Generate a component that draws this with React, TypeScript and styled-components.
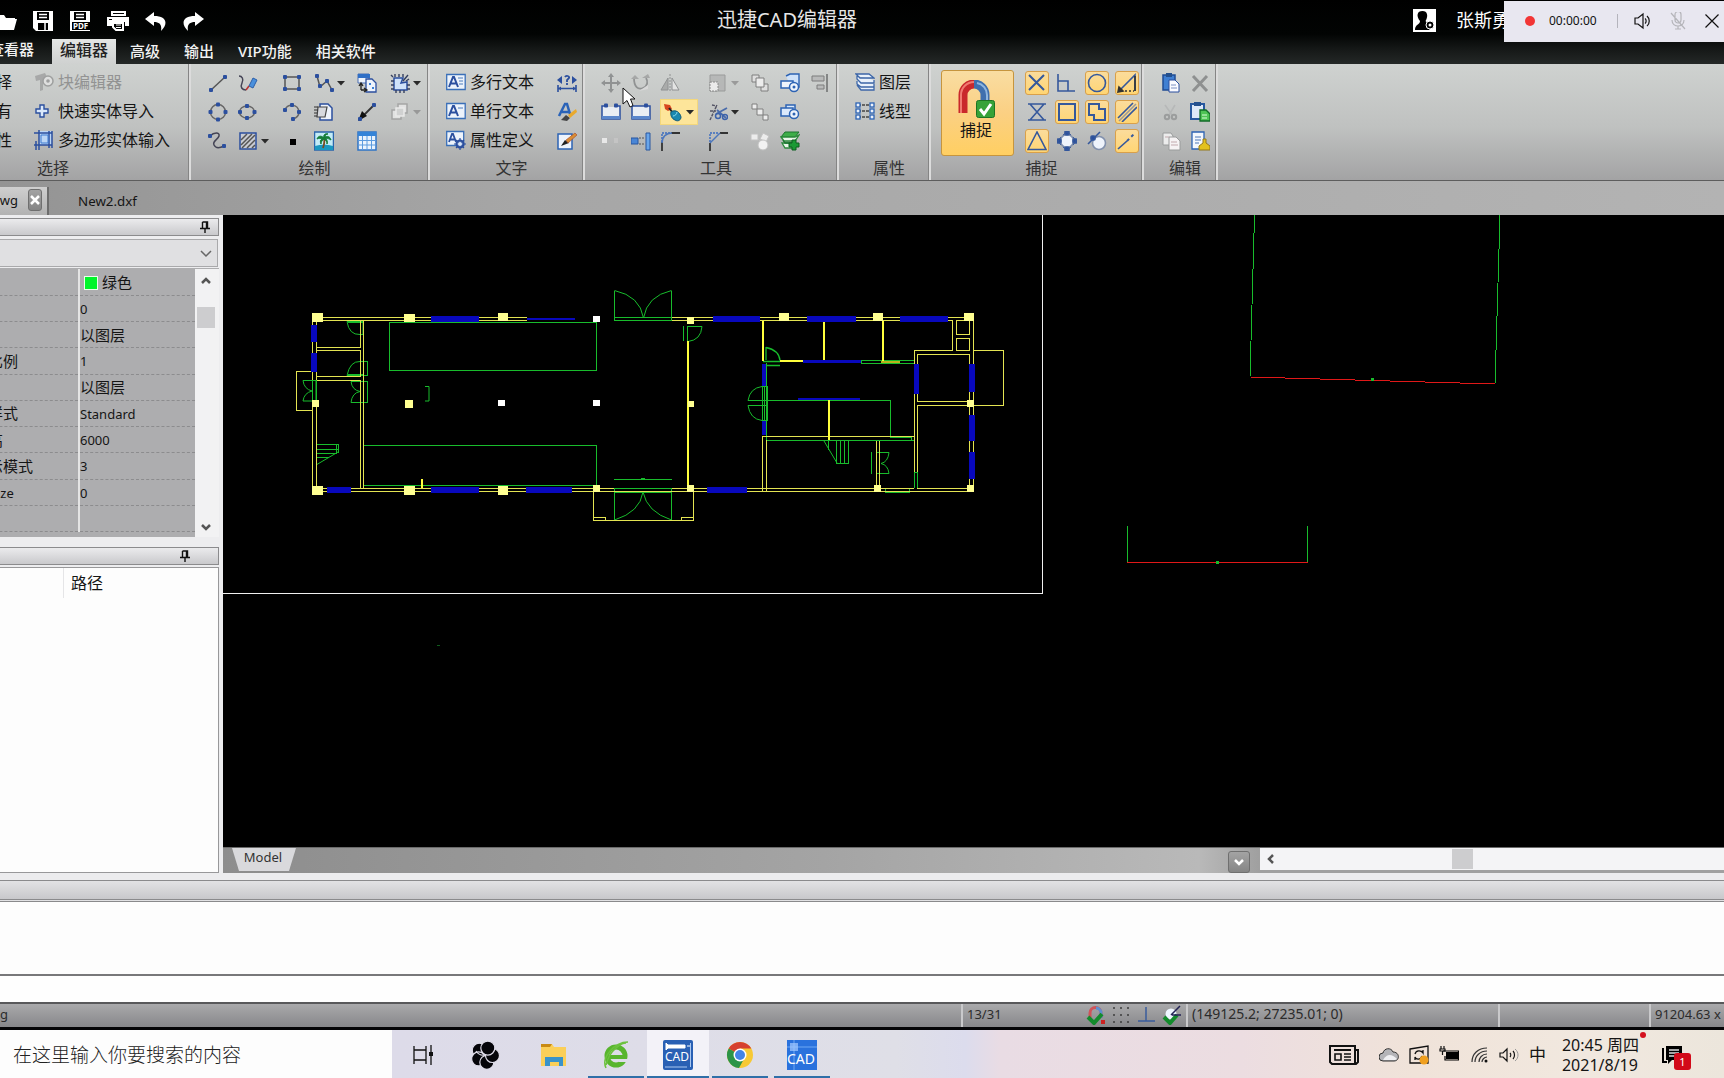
import React from 'react';
import styled, { createGlobalStyle, css } from 'styled-components';

const GlobalStyle = createGlobalStyle`
  * { box-sizing: border-box; }
  html, body { margin: 0; background: #000; overflow-x: hidden; }
  body, button, input, select, textarea {
    font-family: "Noto Sans", "Noto Sans CJK SC", sans-serif;
  }
  button { border: 0; padding: 0; background: none; color: inherit; }
  svg { display: block; flex: none; }
`;

/* ---------- shell ---------- */

const Window = styled.div`
  display: flex;
  flex-direction: column;
  min-height: 100vh;
  overflow: hidden;
  color: #151515;
`;

const TitleArea = styled.header`
  position: relative;
  height: 64px;
  background: linear-gradient(#000 0, #020403 34px, #161918 50px, #242827 64px);
  color: #fff;
`;

const TitleRow = styled.div`
  display: grid;
  grid-template-columns: 1fr auto 1fr;
  align-items: center;
  height: 39px;
`;

const QuickBar = styled.div`
  display: flex;
  align-items: center;
  gap: 15px;
  margin-left: -8px;
  padding-top: 3px;
`;

const AppTitle = styled.h1`
  margin: 0;
  padding-right: 150px;
  font-size: 20px;
  line-height: 38px;
  font-weight: 400;
  color: #e6e6e6;
`;

const UserBox = styled.div`
  display: flex;
  align-items: center;
  justify-content: flex-end;
  gap: 20px;
  padding-right: 214px;
  padding-top: 1px;
  font-size: 18px;
  line-height: 24px;
`;

const Recorder = styled.aside`
  position: absolute;
  top: 1px;
  right: 0;
  display: flex;
  align-items: center;
  width: 220px;
  height: 41px;
  padding: 0 4px 2px 21px;
  background: #e8e7f0;
  color: #111;
  font-size: 12px;
  line-height: 20px;
`;

const RecordDot = styled.span`
  width: 10px;
  height: 10px;
  margin-right: 14px;
  border-radius: 50%;
  background: #f23535;
`;

const RecorderRule = styled.span`
  width: 1px;
  height: 14px;
  margin: 0 16px 0 20px;
  background: #b4b4bc;
`;

const RecorderButtons = styled.div`
  display: flex;
  flex: 1;
  justify-content: space-between;
`;

const RibbonTabs = styled.nav`
  display: flex;
  height: 25px;
`;

const RibbonTab = styled.button<{ $active?: boolean; $cut?: boolean }>`
  height: 25px;
  padding: 0 12px 2px;
  font-size: 15px;
  line-height: 20px;
  font-weight: 500;
  white-space: nowrap;
  color: #f2f2f2;
  ${p => p.$cut && css`
    display: flex;
    justify-content: flex-end;
    width: 52px;
    padding-right: 18px;
  `}
  ${p => p.$active && css`
    width: 64px;
    margin-right: 2px;
    padding: 0 0 4px;
    background: linear-gradient(#e4e6e5, #cfd1d0);
    color: #222;
    font-size: 16px;
  `}
`;

/* ---------- ribbon ---------- */

const Ribbon = styled.div`
  display: flex;
  height: 117px;
  border-bottom: 1px solid #5d5d5d;
  background: linear-gradient(#cfd2d0, #bfc1c0 55%, #a3a3a4);
`;

const Group = styled.section<{ $w: number; $left: number }>`
  display: flex;
  flex-direction: column;
  flex: none;
  width: ${p => p.$w}px;
  padding-top: 4px;
  border-right: 2px solid #dcdcdc;
  box-shadow: inset -1px 0 #858585;
  & > div { padding-left: ${p => p.$left}px; }
`;

const GroupBody = styled.div`
  display: flex;
  height: 89px;
`;

const GroupLabel = styled.h2<{ $shift?: number }>`
  margin: 0;
  padding: 0 ${p => p.$shift || 0}px 0 10px;
  font-size: 16px;
  line-height: 24px;
  font-weight: 400;
  text-align: center;
  color: #333;
`;

const IconGrid = styled.div<{ $cols: string }>`
  display: grid;
  grid-template-columns: ${p => p.$cols};
  grid-template-rows: repeat(3, 29px);
  align-items: center;
`;

const Tool = styled.button<{ $hot?: boolean; $off?: boolean }>`
  display: flex;
  align-items: center;
  gap: 3px;
  width: max-content;
  height: 26px;
  opacity: ${p => (p.$off ? 0.75 : 1)};
  ${p => p.$hot && css`
    padding: 0 3px 0 2px;
    border: 1px solid #f3d77c;
    background: #fde59a;
  `}
`;

const LabelTool = styled(Tool)`
  gap: 4px;
  padding-bottom: 1px;
  font-size: 16px;
  line-height: 24px;
  white-space: nowrap;
  color: ${p => (p.$off ? '#808080' : '#151515')};
`;

const Column = styled.div<{ $w?: number; $cut?: boolean }>`
  display: grid;
  grid-template-rows: repeat(3, 29px);
  align-content: start;
  align-items: center;
  width: ${p => (p.$w ? `${p.$w}px` : 'auto')};
  margin-left: ${p => (p.$cut ? '-20px' : '0')};
`;

const BigSnap = styled.button`
  display: flex;
  flex-direction: column;
  align-items: center;
  width: 73px;
  height: 86px;
  margin: 2px 11px 0 0;
  padding: 9px 3px 0 0;
  border: 1px solid #c6953e;
  border-radius: 3px;
  background: linear-gradient(#f9dda2, #fbd083 50%, #ffcf62);
  font-size: 16px;
  line-height: 24px;
`;

const SnapGrid = styled.div`
  display: grid;
  grid-template-columns: repeat(4, 24px);
  grid-template-rows: repeat(3, 24px);
  gap: 5px 6px;
  padding-top: 3px;
`;

const SnapToggle = styled.button<{ $on?: boolean }>`
  display: grid;
  place-items: center;
  ${p => p.$on && css`
    border: 1px solid #d9a04a;
    border-radius: 3px;
    background: linear-gradient(#fbdc9c, #ffd573);
  `}
`;

/* ---------- documents ---------- */

const DocTabs = styled.nav`
  display: flex;
  align-items: center;
  height: 34px;
  padding-top: 6px;
  background: linear-gradient(90deg, #949494, #a6a6a6 30%, #b3b3b3);
  font-size: 13px;
  line-height: 20px;
`;

const DocTab = styled.div`
  display: flex;
  align-items: center;
  justify-content: flex-end;
  gap: 10px;
  width: 49px;
  height: 28px;
  padding: 0 5px 2px 0;
  border-right: 2px solid #6d6d6d;
  background: linear-gradient(#cfcfcf, #b2b2b2);
`;

const DocName = styled.button`
  padding-left: 29px;
`;

const SmallSquare = styled.button`
  display: grid;
  place-items: center;
  width: 22px;
  height: 22px;
  border: 1px solid #6f6f6f;
  border-radius: 3px;
  background: linear-gradient(#a3a3a3, #858585);
`;

const Work = styled.main`
  display: flex;
  flex: 1;
  min-height: 600px;
`;

const Palette = styled.aside`
  display: flex;
  flex-direction: column;
  width: 269px;
  margin-left: -46px;
  padding: 3px 4px 0 0;
  background: #ededef;
`;

const PaneHead = styled.div<{ $pad: number }>`
  display: flex;
  align-items: center;
  justify-content: flex-end;
  height: 18px;
  padding-right: ${p => p.$pad}px;
  border: 1px solid #8b8b8d;
  background: linear-gradient(#ebebed, #c9c9cc);
`;

const Combo = styled.div`
  display: grid;
  grid-template-columns: 1fr 22px;
  align-items: center;
  height: 28px;
  margin: 3px 1px 1px 0;
  border: 1px solid #a9a9ab;
  background: #e0e0e2;
`;

const ComboSelect = styled.select`
  grid-area: 1 / 1 / 2 / 3;
  width: 100%;
  height: 26px;
  border: 0;
  background: transparent;
  appearance: none;
`;

const ComboMark = styled.span`
  grid-area: 1 / 2;
  display: grid;
  place-items: center;
  pointer-events: none;
`;

const GridPane = styled.div`
  display: flex;
  height: 269px;
  margin-bottom: 10px;
  padding-top: 1px;
  background: #adadaf;
`;

const PropTable = styled.table`
  flex: 1;
  height: 263px;
  border-collapse: collapse;
  font-size: 15px;
  line-height: 22px;
  tr { height: 26px; }
`;

const Key = styled.th`
  width: 125px;
  padding: 0 0 0 4px;
  border-right: 2px solid #e4e4e4;
  border-bottom: 1px dashed #8c8c8e;
  font-weight: 400;
  text-align: left;
  white-space: nowrap;
`;

const Value = styled.td`
  padding: 0;
  border-bottom: 1px dashed #8c8c8e;
  white-space: nowrap;
`;

const Latin = styled.span`
  font-size: 13px;
`;

const Swatch = styled.span`
  display: inline-block;
  width: 14px;
  height: 14px;
  margin: 0 4px 0 4px;
  border: 1px solid #eaffea;
  background: #00f52a;
  vertical-align: -2px;
`;

const VScroll = styled.div`
  display: flex;
  flex-direction: column;
  align-items: center;
  width: 24px;
  padding: 6px 4px 4px 2px;
  background: #f2f2f3;
`;

const VThumb = styled.span`
  width: 18px;
  height: 21px;
  margin: 20px 0 auto;
  background: #cdcdcf;
`;

const ListPane = styled.div`
  flex: 1;
  margin-top: 2px;
  border: 1px solid #98989a;
  background: #fdfdfd;
`;

const ListHead = styled.div`
  width: 110px;
  margin-left: 108px;
  padding-left: 7px;
  border-left: 1px solid #e5e5e7;
  font-size: 16px;
  line-height: 30px;
`;

const Stage = styled.div`
  display: flex;
  flex-direction: column;
  flex: 1;
  min-width: 0;
`;

const Canvas = styled.div`
  flex: 1;
  min-height: 0;
  background: #000;
  overflow: hidden;
  & > svg { width: 100%; height: 100%; }
`;

const SheetBar = styled.div`
  display: flex;
  height: 26px;
  padding-left: 9px;
  border-top: 1px solid #6a6a6a;
  background: linear-gradient(90deg, #8d8d8d, #a4a4a4 40%, #b9b9b9 65%, #a0a0a0 69%);
`;

const SheetTab = styled.button`
  width: 64px;
  height: 23px;
  padding: 0 2px 4px 0;
  clip-path: polygon(0 0, 100% 0, 57px 100%, 7px 100%);
  background: #d9d9dc;
  font-size: 13px;
  line-height: 19px;
  color: #333;
`;

const SheetRight = styled.div`
  display: flex;
  align-items: flex-start;
  width: 31%;
  min-width: 300px;
  margin-left: auto;
  margin-right: 33px;
  gap: 10px;
  & > ${SmallSquare} { margin-top: 3px; }
`;

const HScroll = styled.div`
  display: flex;
  align-items: center;
  flex: 1;
  height: 22px;
  margin-right: -33px;
  padding-left: 5px;
  background: #f4f4f6;
`;

const HThumb = styled.span`
  width: 21px;
  height: 20px;
  margin-left: 38%;
  background: #cdcdcf;
`;

const CommandHead = styled.div`
  height: 29px;
  border-top: 7px solid #ececee;
  border-bottom: 3px double #8a8a8c;
  background: linear-gradient(#8a8a8c 1px, #e2e2e4 1px, #c8c8cb);
`;

const CommandLog = styled.textarea`
  display: block;
  width: 100%;
  height: 74px;
  border: 0;
  border-bottom: 2px solid #78787a;
  background: #fdfdfd;
  resize: none;
`;

const CommandInput = styled.input`
  display: block;
  width: 100%;
  height: 26px;
  border: 0;
  background: #fefefe;
`;

const StatusBar = styled.footer`
  display: flex;
  align-items: stretch;
  height: 28px;
  border-top: 2px solid #58585a;
  border-bottom: 3px solid #050507;
  background: linear-gradient(#a9a9ab, #87878a);
  font-size: 13px;
  line-height: 20px;
  color: #2b2b2b;
`;

const StatusCell = styled.div<{ $w?: number; $size?: number }>`
  display: flex;
  align-items: center;
  flex: ${p => (p.$w ? 'none' : '1')};
  width: ${p => (p.$w ? `${p.$w}px` : 'auto')};
  padding: 0 0 3px 4px;
  border-left: 2px solid #c9c9cb;
  font-size: ${p => p.$size || 13}px;
  white-space: nowrap;
  &:first-child { border-left: 0; padding-left: 0; }
`;

const StatusIcons = styled.div`
  display: flex;
  align-items: center;
  justify-content: space-between;
  width: 100px;
  padding: 0 4px 2px 0;
`;

/* ---------- taskbar ---------- */

const Taskbar = styled.div`
  display: flex;
  height: 48px;
  background: linear-gradient(90deg, #dddbe9 23%, #dfdfe7 52%, #dcdced 56%, #e9dce4 58%, #ecdde1 72%, #f0e3d9 82%, #f1e8df 92%, #ece6dc);
`;

const Search = styled.input`
  width: 392px;
  padding: 2px 13px 0;
  border: 0;
  background: #fdfdfd;
  font-size: 19px;
  line-height: 28px;
  font-weight: 300;
  &::placeholder { color: #222; opacity: 1; }
`;

const TaskGroup = styled.div`
  display: flex;
  margin-right: 7px;
`;

const Task = styled.button<{ $run?: boolean; $active?: boolean }>`
  display: grid;
  place-items: center;
  width: 62px;
  padding-top: 4px;
  background: ${p => (p.$active ? '#f3f2f8' : 'none')};
  border-bottom: 2px solid transparent;
  background-clip: padding-box;
  ${p => (p.$run || p.$active) && css`
    border-image: linear-gradient(90deg, transparent ${p.$active ? 0 : 5}px, #2f6fa8 ${p.$active ? 0 : 5}px, #2f6fa8 ${p.$active ? 62 : 57}px, transparent ${p.$active ? 62 : 57}px) 2;
  `}
`;

const Tray = styled.div`
  display: flex;
  align-items: center;
  gap: 10px;
  margin-left: auto;
  padding-right: 33px;
  padding-top: 2px;
`;

const NewsButton = styled(Tool)`
  margin-right: 10px;
`;

const Ime = styled.button`
  font-size: 17px;
  line-height: 24px;
`;

const Clock = styled.time`
  position: relative;
  margin: 0 12px 0 6px;
  font-size: 16px;
  line-height: 20px;
  white-space: nowrap;
`;

const AlertDot = styled.span`
  position: absolute;
  top: -3px;
  right: -7px;
  width: 6px;
  height: 6px;
  border-radius: 50%;
  background: #d4121f;
`;

const Notify = styled.button`
  position: relative;
  width: 30px;
  height: 30px;
`;

const Count = styled.span`
  position: absolute;
  right: 0;
  bottom: 0;
  width: 17px;
  height: 17px;
  border-radius: 3px;
  background: #d20a19;
  color: #fff;
  font-size: 11px;
  line-height: 17px;
`;

const Pointer = styled.span`
  position: absolute;
  top: 87px;
  left: 622px;
  pointer-events: none;
`;

/* ---------- glyphs ---------- */

const B = '#2b4f9e';
const G = '#7d7f80';
const W = '#eef3fb';

type GlyphProps = { children: React.ReactNode; w?: number; h?: number };
const Glyph = ({ children, w = 20, h = 20 }: GlyphProps) => (
  <svg width={w} height={h} viewBox={`0 0 ${w} ${h}`} fill="none" aria-hidden="true">{children}</svg>
);

const dots = (pts: number[][], c = B, s = 4) =>
  pts.map(([x, y], i) => <rect key={i} x={x - s / 2} y={y - s / 2} width={s} height={s} rx={1} fill={c} />);

const Down = ({ off }: { off?: boolean }) => (
  <Glyph w={8} h={6}><path d="M0 1h8L4 5.500z" fill={off ? '#8a8a8a' : '#2a2a2a'} /></Glyph>
);

const Chevron = ({ d, c = '#555', w = 2 }: { d: string; c?: string; w?: number }) => (
  <Glyph w={12} h={12}><path d={d} stroke={c} strokeWidth={w} /></Glyph>
);

const Pin = () => (
  <Glyph w={10} h={12}><path d="M2.500 1h5v6M2.500 1v6M0 7.500h10M5 8v4M6.500 1v6" stroke="#111" strokeWidth="1.400" /></Glyph>
);

const icon: Record<string, React.ReactNode> = {
  blockEdit: <Glyph><path d="M1 4l10-3 2 4-4 2v11l-3 1V8L2 9z" fill="#9b9c9c" /><circle cx="14" cy="9" r="5" fill="#e5e5e5" stroke="#8f9090" strokeWidth="1.500" /><circle cx="14" cy="9" r="1.800" fill="#8f9090" /></Glyph>,
  plus: <Glyph><path d="M6 4h4v4h4v4h-4v4H6v-4H2V8h4z" fill="#dbe9fb" stroke={B} strokeWidth="1.400" /></Glyph>,
  poly: <Glyph><path d="M5 1h13v14H5z" fill="#bcd6f5" /><path d="M5 0v20M15 1v17M0 3h18M0 15h18M2 20v-9M18 1v17" stroke={B} strokeWidth="1.500" /><path d="M7 5h7v8H7z" stroke="#3c7ad0" /></Glyph>,
  line: <Glyph><path d="M3 17L17 4" stroke="#555" strokeWidth="1.500" />{dots([[3, 17], [17, 4]])}</Glyph>,
  pen: <Glyph><path d="M1 3c3 0 5 3 3 7s0 7 4 7" stroke="#445" strokeWidth="1.500" /><path d="M8 17l3-4" stroke="#b33" strokeWidth="1.500" /><path d="M11 13l4-8 4 2-4 8z" fill="#4a90dc" stroke="#2c5fa8" /></Glyph>,
  rect: <Glyph><path d="M3 4h14v12H3z" stroke="#555" strokeWidth="1.500" />{dots([[3, 4], [17, 4], [3, 16], [17, 16]])}</Glyph>,
  pline: <Glyph><path d="M3 3l3 11 7-6 5 9" stroke="#555" strokeWidth="1.500" />{dots([[3, 3], [6, 13], [13, 8], [18, 17]])}</Glyph>,
  insert: <Glyph><path d="M1 1h11v9H1z" fill={W} stroke="#4a6fb0" /><path d="M1 1h12v4H1z" fill="#2f6fc6" /><path d="M9 6h6l4 4v9H9z" fill={W} stroke={B} strokeWidth="1.300" /><path d="M4 17v-6M2 13l2-3 2 3M4 17h5M7 15l3 2-3 2" stroke="#222" strokeWidth="1.300" /><path d="M12 10h2v2h-2zM15 14h2v2h-2z" fill="#3a82d8" /></Glyph>,
  region: <Glyph><path d="M4 5h9l-2 5 6-1v8H4z" fill="#cfe2fa" stroke={B} strokeWidth="1.500" /><path d="M1 2l2 2M5 1v3M9 1v3M13 1v3M18 2l-5 6M19 6l-3 2M1 8h3M1 12h3M1 16h3M17 12h3M17 16h3M6 17v3M10 17v3M14 17v3" stroke="#343f60" strokeWidth="1.400" /></Glyph>,
  circle: <Glyph><circle cx="10" cy="10" r="7.500" stroke="#666" strokeWidth="1.500" />{dots([[10, 2.5], [10, 17.5], [2.500, 10], [17.5, 10]])}</Glyph>,
  ellipse: <Glyph><ellipse cx="9" cy="10" rx="7.500" ry="6" stroke="#666" strokeWidth="1.500" />{dots([[9, 4], [9, 16], [2, 10], [16.500, 10]])}</Glyph>,
  arc: <Glyph><path d="M3 8c2-6 13-7 14 2 0 4-3 6-6 7" stroke="#666" strokeWidth="1.500" />{dots([[3, 8], [10, 3], [17, 10], [11, 17]])}</Glyph>,
  copyPage: <Glyph><path d="M6 2h8l4 4v12H6z" fill={W} stroke={B} strokeWidth="1.500" /><path d="M4 5h9l-2 10H3z" fill="#d7d9de" stroke="#444" strokeWidth="1.200" /><path d="M0 5h4M0 8h4M0 11h3M0 14h3" stroke="#333" /></Glyph>,
  arrow: <Glyph><path d="M17 3L3 17" stroke="#333" strokeWidth="1.800" /><path d="M1 19l4-10 5 5z" fill="#111" />{dots([[17, 3], [3, 17]])}</Glyph>,
  wipe: <Glyph><path d="M2 8h9v9H2zM8 2h9v9H8z" fill="#ececec" stroke="#9a9b9b" strokeWidth="1.500" /><path d="M6 6h8v8H6z" fill="#d5d6d6" stroke="#f6f6f6" strokeWidth="1.500" /></Glyph>,
  spline: <Glyph><path d="M2 5c4-4 10-4 9 0s-7 5-5 9 6 3 10 1" stroke="#445" strokeWidth="1.500" />{dots([[2, 5], [16, 15]])}</Glyph>,
  hatch: <Glyph><path d="M2 2h16v16H2z" fill="#c9cbd2" stroke={B} strokeWidth="1.500" /><path d="M3 9l6-6M3 14L14 3M4 17L17 4M9 17l8-8M14 17l3-3" stroke="#555" strokeWidth="1.500" /></Glyph>,
  point: <Glyph><path d="M8 8h6v6H8z" fill="#000" /></Glyph>,
  image: <Glyph><path d="M0.500 1h19v18H.5z" fill="#c3ecf7" stroke="#2b66ac" strokeWidth="1.500" /><path d="M1 15c6-2 12-2 18 0v4H1z" fill="#1998c0" /><path d="M10 7c1 4 0 7-1 10" stroke="#7a4b22" strokeWidth="1.800" /><path d="M10 7C7 4 4 5 3 8c2-1 4-1 5 0-2 1-2 3-1 5 0-3 2-4 3-5 2 1 3 3 3 5 1-2 0-4-1-5 2-1 3 0 5 1-1-4-4-4-6-3 0-2 2-3 3-3-3-1-5 1-4 4z" fill="#137d38" stroke="#137d38" /></Glyph>,
  table: <Glyph><path d="M1 1h18v18H1z" fill="#e9f3fd" stroke="#2f74c6" strokeWidth="1.500" /><path d="M1 1h18v4H1z" fill="#3584d8" /><path d="M5.500 5v14M10 5v14M14.500 5v14M1 9.500h18M1 14h18" stroke="#5b9bdf" /></Glyph>,
  mtext: <Glyph><path d="M.7 2.500h18.500v15H.7z" fill="#edf3fb" stroke="#3a6fb8" strokeWidth="1.300" /><path d="M3 15L7 5h1l4 10M5 11.500h5" stroke={B} strokeWidth="2" /><path d="M12 6h5M13 9h4M13 12h4" stroke="#4d7dbc" /></Glyph>,
  stext: <Glyph><path d="M.7 2.500h18.500v15H.7z" fill="#edf3fb" stroke="#3a6fb8" strokeWidth="1.300" /><path d="M3 15L7 5h1l4 10M5 11.500h5" stroke={B} strokeWidth="2" /><path d="M12 7h5" stroke="#4d7dbc" /></Glyph>,
  attr: <Glyph><path d="M.7 1.500h17v14H.7z" fill="#edf3fb" stroke="#3a6fb8" strokeWidth="1.300" /><path d="M3 12L6 4h1l3 8M4 9.500h5" stroke={B} strokeWidth="1.800" /><circle cx="14" cy="14" r="3.500" stroke={B} strokeWidth="2" /><path d="M14 8v12M8 14h12M10 10l8 8M18 10l-8 8" stroke={B} strokeWidth="1.200" /><circle cx="14" cy="14" r="2" fill="#dbe8f8" /></Glyph>,
  dim: <Glyph><path d="M1 15.500h18M1 12v7M19 12v7" stroke={B} strokeWidth="1.600" /><path d="M0 7l5-4v8zM20 7l-5-4v8zM1 15.500l3-2v4zM19 15.500l-3-2v4z" fill={B} /><path d="M8 4c1-2 5-1 4 1l-2 2v2M10 10v2" stroke={B} strokeWidth="1.800" /></Glyph>,
  tstyle: <Glyph><path d="M2 14L8 2h2l3 10M5 10h7" stroke="#2a63b8" strokeWidth="2.500" /><path d="M4 18l5-5 4 3-3 3z" fill="#444" /><path d="M11 13l8-6 1 3-7 6z" fill="#e9a92d" /></Glyph>,
  edit: <Glyph><path d="M1 3h14v15H1z" fill={W} stroke="#2c63b4" strokeWidth="1.500" /><path d="M4 15l4-6 4 3z" fill="#222" /><path d="M9 9l9-7 2 2-9 8z" fill="#d98d33" stroke="#a34427" strokeWidth=".6" /></Glyph>,
  move: <Glyph><path d="M10 2v16M2 10h16" stroke={G} strokeWidth="2" /><path d="M10 0l3 4H7zM10 20l3-4H7zM0 10l4-3v6zM20 10l-4-3v6z" fill={G} /></Glyph>,
  rotate: <Glyph><path d="M3 5c0 9 4 12 9 10 5-2 5-7 3-10" stroke={G} strokeWidth="1.800" /><path d="M0 6l4-4 4 4zM11 5h8l-2-4z" fill="#9a9b9b" /><path d="M8 18l9-6v4z" fill="#ddd" /></Glyph>,
  mirror: <Glyph><path d="M1 17L8 5v12z" fill="#9fa0a0" stroke={G} /><path d="M12 5l7 12h-7z" fill="#ececec" stroke={G} /><path d="M10 1v18" stroke={G} strokeDasharray="2 1" /></Glyph>,
  scale: <Glyph><path d="M2 2h15v16H2z" fill="#b0b1b1" stroke="#8a8b8b" /><path d="M2 9h8v9H2z" fill="#f6f6f6" stroke="#777" strokeDasharray="2 1" /></Glyph>,
  stack: <Glyph><path d="M2 2h7v7H2zM11 11h7v7h-7z" fill="#dedede" stroke="#7e7f7f" /><path d="M6 5h8v9H6z" fill="#ececec" stroke="#7e7f7f" /></Glyph>,
  shapes: <Glyph><path d="M6 3l4-2h9v13h-8" fill="#cfe2fa" stroke="#2c63b4" strokeWidth="1.400" /><path d="M1 8h12v7H1z" fill={W} stroke="#2c63b4" strokeWidth="1.500" /><circle cx="14" cy="14" r="4.500" fill={W} stroke="#2c63b4" strokeWidth="1.500" /><circle cx="14" cy="14" r="1.500" fill="#2c63b4" /></Glyph>,
  align: <Glyph w={17}><path d="M1 3h12v5H1zM6 12h7v4H6z" fill="#b9baba" stroke="#7c7d7d" /><path d="M16 1v18" stroke="#6d6e6e" strokeWidth="1.500" /></Glyph>,
  boxA: <Glyph><path d="M1 4h18v13H1z" fill="#e9edf4" stroke={B} strokeWidth="1.500" /><path d="M1 14h18v3H1z" fill="#5a86cc" />{dots([[5, 3.500], [15, 3.500]], B, 4)}<path d="M7 3h6v2H7z" fill="#c4c6c6" /></Glyph>,
  boxB: <Glyph><path d="M1 4h18v13H1z" fill="#e9edf4" stroke={B} strokeWidth="1.500" /><path d="M1 14h18v3H1z" fill="#5a86cc" />{dots([[15, 3.500]], B, 4)}</Glyph>,
  explode: <Glyph><path d="M1 2l6 1 2 4-4 2-3-2z" fill="#d8461f" /><path d="M6 6l4 5" stroke="#222" strokeWidth="2" /><path d="M8 10c4-3 9 0 10 5 0 3-3 5-6 3-3-1-5-5-4-8z" fill="#1c88b0" stroke="#0e5878" /><path d="M10 14c2 0 4-2 4-4" stroke="#8fe0f4" /></Glyph>,
  trim: <Glyph><path d="M2 18L9 3M4 3l5 1M2 9h6" stroke="#556" strokeDasharray="3 1" strokeWidth="1.400" /><path d="M8 12l11-6M9 8l9 8" stroke="#4a6cab" strokeWidth="1.800" /><circle cx="17" cy="15" r="2.500" stroke="#3c62aa" strokeWidth="1.500" /><circle cx="10" cy="14" r="2.500" stroke="#3c62aa" strokeWidth="1.500" /></Glyph>,
  cubes: <Glyph><path d="M2 2h5v5H2zM7 7h6v6H7zM13 13h5v5h-5z" fill="#ececec" stroke="#7e7f7f" /></Glyph>,
  shapeB: <Glyph><path d="M1 6h12v8H1zM6 6V3h9v5" fill="#dbe9fb" stroke="#2c63b4" strokeWidth="1.500" /><circle cx="14" cy="12" r="4.500" fill={W} stroke="#2c63b4" strokeWidth="1.500" /><circle cx="14" cy="12" r="1.500" fill="#2c63b4" /></Glyph>,
  breakAt: <Glyph><path d="M1 7h5v5H1z" fill="#e8e8e8" /><path d="M13 7h4v5h-4z" fill="#c4c4c4" /></Glyph>,
  extend: <Glyph><path d="M0 7h7v6H0z" fill="#4a86d6" stroke="#2856a0" /><path d="M8 7h6M8 13h6" stroke="#555" strokeDasharray="2 1" /><path d="M15 2h4v17h-4z" fill="#6aa6ea" stroke="#2856a0" /></Glyph>,
  fillet: <Glyph><path d="M2 11L2 2h9" stroke="#3a6cc0" strokeWidth="1.400" strokeDasharray="2 1" /><path d="M2 20v-9M11 2h9" stroke="#333" strokeWidth="1.800" /><path d="M2 12C2 6 6 2 12 2" stroke="#4b76bc" strokeWidth="1.500" /></Glyph>,
  chamfer: <Glyph><path d="M2 11V2h9" stroke="#3a6cc0" strokeWidth="1.400" strokeDasharray="2 1" /><path d="M2 20v-8M12 2h8" stroke="#333" strokeWidth="1.800" /><path d="M2 12L12 2" stroke="#4b76bc" strokeWidth="1.500" /></Glyph>,
  scatter: <Glyph><path d="M1 3h7v6H1zM13 2l6 3-3 6-6-3zM8 8l4 4" fill="#ececec" stroke="#c2c2c2" /><circle cx="13" cy="14" r="5" fill="#f2f2f2" stroke="#c2c2c2" /></Glyph>,
  layerAdd: <Glyph><path d="M5 1h14l-4 5H1z" fill="#3eae49" stroke="#1d7530" /><path d="M1 6l3 4h11l4-6-4 2zM2 12l3 5h10l-1-5z" fill="#eaf7ea" stroke="#2c8a3c" strokeWidth="1.300" /><path d="M3 9l2 3h10" stroke="#1d7530" strokeWidth="1.300" /><path d="M12 9h4v3h3v4h-3v3h-4v-3H9v-4h3z" fill="#1a9a35" stroke="#0d5e20" /></Glyph>,
  layers: <Glyph><path d="M1 2h13l5 4H5zM2 4v3l4 4h13V8M2 9v3l4 3h13v-3M2 13l4 5h13v-3" fill="#e9f1fb" stroke="#3c66a8" strokeWidth="1.300" /></Glyph>,
  ltype: <Glyph><path d="M3 4h14M3 10h14M3 16h14" stroke="#444" strokeDasharray="3 1" strokeWidth="1.300" />{[4, 10, 16].map(y => <React.Fragment key={y}><rect x="1" y={y - 2} width="4" height="4" fill={W} stroke="#2c63b4" strokeWidth="1.300" /><rect x="15" y={y - 2} width="4" height="4" fill={W} stroke="#2c63b4" strokeWidth="1.300" /></React.Fragment>)}</Glyph>,
  paste: <Glyph><path d="M2 2h12v15H2z" fill="#3f7fd2" stroke="#1f4c94" strokeWidth="1.500" /><path d="M5 0h6v4H5z" fill="#24508e" /><path d="M8 7h6l4 4v8H8z" fill="#fbfbff" stroke={B} /><path d="M10 12h5M10 15h6" stroke="#7a8fc0" /></Glyph>,
  del: <Glyph><path d="M3 3l14 15M17 3L3 18" stroke="#8e9090" strokeWidth="3" /></Glyph>,
  cut: <Glyph><path d="M4 3l7 10M14 3L8 13" stroke="#b6b8b8" strokeWidth="1.600" /><circle cx="6" cy="15" r="2.200" stroke="#9b9d9d" strokeWidth="2" /><circle cx="13" cy="15" r="2.200" stroke="#9b9d9d" strokeWidth="2" /></Glyph>,
  pasteBlk: <Glyph><path d="M1 2h13v15H1z" fill="#dde8f8" stroke="#27589f" strokeWidth="2" /><path d="M4 0h7v4H4z" fill="#24508e" /><path d="M10 8h6l4 4v7H10z" fill="#4ec355" stroke="#116b27" strokeWidth="1.300" /><path d="M12 13h5M12 16h5" stroke="#d9ffd9" /></Glyph>,
  copy: <Glyph><path d="M2 2h8l2 3v9H2z" fill="#ececec" stroke="#9a9c9c" /><path d="M8 6h7l4 4v9H8z" fill="#f6f3f4" stroke="#9a9c9c" /><path d="M10 11h6M10 14h7M4 6h4" stroke="#c2a9ad" /></Glyph>,
  matchProp: <Glyph><path d="M2 1h12v17H2z" fill="#f4f7fc" stroke="#2c63b4" strokeWidth="1.300" /><path d="M5 6h6M5 9h6M5 12h4" stroke="#4c77b8" /><path d="M13 8h3v4l4 3v4H9v-4l4-3z" fill="#e3c21f" stroke="#94791a" /></Glyph>,
};

const snapShapes: { id: string; on?: boolean; name: string; art: React.ReactNode }[] = [
  { id: 's1', on: true, name: '交点', art: <path d="M2 2l15 15M17 2L2 17" strokeWidth="2" /> },
  { id: 's2', name: '垂足', art: <path d="M1 1v17h17M1 8h10v10" /> },
  { id: 's3', on: true, name: '圆心', art: <circle cx="10" cy="10" r="8.500" /> },
  { id: 's4', on: true, name: '外观', art: <><path d="M2 18L18 2v16" /><path d="M4 18h13" stroke="#333" strokeDasharray="2 2" /><path d="M1 19l1-5 4 4zM18 3v15" fill="#333" stroke="#333" /></> },
  { id: 's5', name: '最近点', art: <path d="M1 2h18M1 18h18M3 2l14 16M17 2L3 18" /> },
  { id: 's6', on: true, name: '端点', art: <path d="M2 2h16v16H2z" strokeWidth="2" /> },
  { id: 's7', on: true, name: '插入点', art: <path d="M2 2h10v5h6v11H7v-5H2z" strokeWidth="2" /> },
  { id: 's8', on: true, name: '平行', art: <><path d="M1 16L16 1M5 20L20 5" /><path d="M2 19L19 2" stroke="#999" /></> },
  { id: 's9', on: true, name: '中点', art: <path d="M10 1L1 18.500h18z" /> },
  { id: 's10', name: '象限点', art: <><circle cx="10" cy="10" r="6.500" fill={W} stroke="#8291ad" />{dots([[10, 2], [10, 18], [2, 10], [18, 10]])}<path d="M6 4l4-3 4 3M16 6l3 4-3 4M14 16l-4 3-4-3M4 14l-3-4 3-4" strokeWidth="1" /></> },
  { id: 's11', name: '切点', art: <><circle cx="12" cy="12" r="6.500" fill={W} stroke="#8291ad" /><path d="M1 13L13 1" />{dots([[6, 7]])}</> },
  { id: 's12', on: true, name: '延伸', art: <><path d="M1 18L10 10" /><path d="M10 10l8-8" strokeDasharray="3 3" strokeWidth="2" /></> },
];

type Cell = { k?: string; d?: boolean; off?: boolean; hot?: boolean };
const ToolCell = ({ c }: { c: Cell }) =>
  c.k ? (
    <Tool $hot={c.hot} $off={c.off} aria-label={c.k}>
      {icon[c.k]}
      {c.d && <Down off={c.off} />}
    </Tool>
  ) : <span />;

const drawCells: Cell[] = [
  { k: 'line' }, { k: 'pen' }, { k: 'rect' }, { k: 'pline', d: true }, { k: 'insert' }, { k: 'region', d: true },
  { k: 'circle' }, { k: 'ellipse' }, { k: 'arc' }, { k: 'copyPage' }, { k: 'arrow' }, { k: 'wipe', d: true, off: true },
  { k: 'spline' }, { k: 'hatch', d: true }, { k: 'point' }, { k: 'image' }, { k: 'table' }, {},
];

const toolCells: Cell[] = [
  { k: 'move', off: true }, { k: 'rotate', off: true }, { k: 'mirror', off: true }, { k: 'scale', d: true, off: true }, { k: 'stack' }, { k: 'shapes' }, { k: 'align' },
  { k: 'boxA' }, { k: 'boxB' }, { k: 'explode', d: true, hot: true }, { k: 'trim', d: true }, { k: 'cubes' }, { k: 'shapeB' }, {},
  { k: 'breakAt' }, { k: 'extend' }, { k: 'fillet' }, { k: 'chamfer' }, { k: 'scatter' }, { k: 'layerAdd' }, {},
];

const props: { key?: string; latinKey?: boolean; value: string; latin?: boolean; swatch?: boolean }[] = [
  { value: '绿色', swatch: true },
  { value: '0', latin: true },
  { value: '以图层' },
  { key: '线型比例', value: '1', latin: true },
  { value: '以图层' },
  { key: '文字样式', value: 'Standard', latin: true },
  { key: '文字高', value: '6000', latin: true },
  { key: '点显示模式', value: '3', latin: true },
  { key: 'PointSize', latinKey: true, value: '0', latin: true },
];

/* ---------- drawing ---------- */

const Y = '#e4e452';
const GR = '#18bc2c';
const BL = '#0808bd';

const Drawing = () => (
  <svg fill="none" role="img" aria-label="Model" shapeRendering="crispEdges">
    <g transform="translate(-223 -215)">
      <path d="M1042.500 215V593.500H223" stroke="#f0f0f0" />
      <path d="M1254.500 215L1250 377M1500 215L1495 384M1127.500 526V562M1307.500 526V562" stroke={GR} />
      <path d="M1250 377L1495 384M1127 562.500H1308" stroke="#e01818" />
      <path d="M1371 378h3v3h-3zM1216 561h3v3h-3z" fill={GR} />
      <path d="M437 645h3v1h-3z" fill="#0f5c1c" />

      {/* green outlines */}
      <g stroke={GR}>
        <path d="M389.500 322.500H596.500V370.500H389.500zM363.500 488V445.500H596.500V488M363 485.500H597" />
        <path d="M614.500 321V290.500M671.500 321V290.500M614 320.500H672M614 317.500H672M614.500 488V520.500M671.500 488V520.500M614 488.500H672M614 479.500H672M641 478.500h4M614 492.500H672" />
        <path d="M766 400.500H890.500V437M766.500 363V440M766 440.500H914" />
        <path d="M861.500 360.500H903M861 363.500H914.500V360.500H903M861.500 360V364M890 437.500H911V441M885.500 488.500H909V492H885.500zM914.500 472V488M917.500 472V488M914 472.500h4" />
        <path d="M316 444.500H338M316 449.500H338M316 453.500H337M316 457.500H329M336.500 444V453M338.500 444V453" />
        <path d="M836.500 441V463M840.500 441V463M844.500 441V463M848.500 441V463M836 463.500H849M828.500 441V450" />
        <path d="M683.500 326V341M687.500 326V341M763.500 347V361" />
      </g>
      <g stroke={GR} shapeRendering="auto">
        <path d="M614.500 290.500Q640 296 643.500 318Q647 296 671.500 290.500M614.500 520Q640 512 643 492Q647 512 671.500 520" />
        <path d="M347 321.500H363V334M347 321.500Q349 335 360 334.500H363M347 375.500H363M347 375.500Q350 361 360 361.500H363M367.500 361V376M363 361.500h5M363 375.500h5M360.500 361V376M348 322.500H363M348 374.500H363" />
        <path d="M351 381.500H367M351 381.500Q352 390 360 391.500Q352 393 351 402.500H367M367.500 381V403M363.500 381V403M360.500 381V403M303 380.500H316V401H303M303 380.500Q304 389 312 391Q304 393 303 401M312.500 380V401" />
        <path d="M425 386.500h4V401h-4M338 452L316 465M688 326.500H702Q701 340 688 341.500" />
        <path d="M766 347.500Q779 350 780 360.500M766 347V360M763 361.500H780M764 365.500H780" strokeWidth="1.300" />
        <path d="M762 386.500Q750 388 748 400.500H768M748 405.500H768M748 405.500Q750 419 762 420.500M762.500 386V421M764.500 386V421M767.500 386V421M762 386.500h5M762 420.500h5" />
        <path d="M824 441L837 463M871.500 452V474M876 452.500H889Q888 462 881 463.500Q888 465 889 473.500H876" />
      </g>

      {/* yellow walls */}
      <g stroke={Y}>
        <path d="M312 317.500H527M312 320.500H527M672 317.500H973.500V492M672 320.500H953" />
        <path d="M312.500 317V492M316.500 321V488M316 347.500H360V321M316 350.500H360V376.500H316M316 380.500H360V488M363.500 321V488" />
        <path d="M312 371.500H296.500V410.500H312M312 488.500H593M600 488.500H914M312 491.500H974M918 488.500H970" />
        <path d="M593.500 492V520.500H693.500V492M593 517.500H605V520M694 517.500H681V520" />
        <path d="M952.500 321V350.500H914.500V488M956.500 320.500H969.500V334.500H956.500zM956.500 338.500H969.500V350.500H956.500zM917.500 354.500H969.500V401.500H917.500zM917.500 405.500H969.500V488H917.500z" />
        <path d="M974 350.500H1003.500V405.500H974M762.500 491V436.500H914M766.500 440V491M876.500 441V488M879.500 441V488" />
      </g>
      <path d="M688 341V488M763 321V361M824 321V360M883 321V361M780 361H803M829 400V440M422 479V488" stroke="#ffff3c" strokeWidth="2" />
      <path d="M881 361.500H900" stroke="#b8b21d" strokeWidth="2" />
      <path d="M312.500 380V402M316.500 380V402M614 488.500H672M914.500 472V488M917.500 472V488" stroke={GR} />

      {/* windows */}
      <path d="M431 316h48v6h-48zM713 316h47v6h-47zM807 316h49v6h-49zM900 316h48v6h-48zM327 487h24v6h-24zM431 487h48v6h-48zM526 487h46v6h-46zM707 487h40v6h-40zM311 325h6v17h-6zM311 353h6v19h-6zM762 364h4v22h-4zM762 421h4v14h-4zM803 360h58v3h-58zM914 364h5v30h-5zM969 364h6v28h-6zM969 415h6v26h-6zM969 452h6v27h-6zM527 318h48v2h-48zM798 398h62v2h-62z" fill={BL} />

      {/* columns */}
      <path d="M312 313h11v9h-11zM404 314h11v8h-11zM498 313h10v8h-10zM687 317h7v7h-7zM779 313h10v8h-10zM873 313h10v8h-10zM964 313h10v8h-10zM312 400h7v7h-7zM405 400h8v8h-8zM688 401h6v6h-6zM967 400h7v7h-7zM312 486h11v9h-11zM404 486h11v9h-11zM498 486h10v9h-10zM593 485h7v7h-7zM687 485h7v7h-7zM874 485h7v7h-7zM967 485h7v7h-7z" fill="#ffff91" />
      <path d="M593 316h7v6h-7zM498 400h7v6h-7zM593 400h7v6h-7z" fill="#fff" />
    </g>
  </svg>
);

export default function App() {
  return (
    <Window>
      <GlobalStyle />
      <TitleArea>
        <TitleRow>
          <QuickBar>
            <Tool aria-label="打开"><Glyph w={25}><path d="M0 4h12l2 3h9v3H8L3 19H0z" fill="#fff" /><path d="M5 8h20l-3 11H3z" fill="#fff" /></Glyph></Tool>
            <Tool aria-label="保存"><Glyph w={22} h={22}><path d="M1 1h20v20H4l-3-3z" fill="#fff" /><path d="M5 2h12v8H5zM6 13h10v7H6z" fill="#000" /><path d="M7 4.500h8M7 7.500h8M13 13v7" stroke="#fff" strokeWidth="1.500" /></Glyph></Tool>
            <Tool aria-label="PDF"><Glyph w={22} h={22}><path d="M1 1h20v20H1z" fill="#fff" /><path d="M5 2h12v8H5zM3 12h18v8H3z" fill="#000" /><path d="M7 4.500h8M7 7.500h8" stroke="#fff" strokeWidth="1.500" /><text x="4" y="19" fontSize="8" fontWeight="700" fill="#fff">PDF</text></Glyph></Tool>
            <Tool aria-label="打印"><Glyph w={24} h={22}><path d="M5 1h15v5H5zM1 7h22v9h-4v-4H6v4H1z" fill="#fff" /><path d="M7 3.500h11M3 9.500h3" stroke="#000" /><path d="M7 13h10v7h-7l-3-3z" stroke="#fff" strokeWidth="2" /><path d="M10 15h5M10 17.500h5" stroke="#fff" /></Glyph></Tool>
            <Tool aria-label="撤销"><Glyph w={22} h={22}><path d="M9 2L0 9l9 7v-4c6 0 8 3 7 9 8-8 5-15-7-15z" fill="#fff" /></Glyph></Tool>
            <Tool aria-label="重做"><Glyph w={22} h={22}><path d="M13 2l9 7-9 7v-4c-6 0-8 3-7 9C-2 13 1 6 13 6z" fill="#fff" /></Glyph></Tool>
          </QuickBar>
          <AppTitle>迅捷CAD编辑器</AppTitle>
          <UserBox>
            <Glyph w={23} h={23}><path d="M0 0h23v23H0z" fill="#fff" /><path d="M9.500 2c5 0 6 5 3 10 1 2 3 1 4 2v7H2c0-6 5-5 5-9C3 7 4 2 9.500 2z" fill="#000" /><circle cx="17" cy="16" r="4" fill="#000" stroke="#fff" /><circle cx="17" cy="16" r="1.500" fill="#fff" /></Glyph>
            <span>张斯勇</span>
          </UserBox>
        </TitleRow>
        <RibbonTabs>
          <RibbonTab $cut>查看器</RibbonTab>
          <RibbonTab $active>编辑器</RibbonTab>
          <RibbonTab>高级</RibbonTab>
          <RibbonTab>输出</RibbonTab>
          <RibbonTab>VIP功能</RibbonTab>
          <RibbonTab>相关软件</RibbonTab>
        </RibbonTabs>
        <Recorder>
          <RecordDot />
          <span>00:00:00</span>
          <RecorderRule />
          <RecorderButtons>
            <Tool aria-label="声音"><Glyph w={18} h={18}><path d="M1 6h3l5-4v14l-5-4H1zM11 6.500c1.500 1 1.500 4 0 5M13 4c3 2.500 3 7.500 0 10" stroke="#111" strokeWidth="1.200" /></Glyph></Tool>
            <Tool aria-label="麦克风"><Glyph w={18} h={18}><path d="M6 2.500a3 3 0 016 0V8a3 3 0 01-6 0zM3 8c0 8 12 8 12 0M9 14v3M6 17h6M2 1l14 16" stroke="#b5b5ba" strokeWidth="1.200" /></Glyph></Tool>
            <Tool aria-label="关闭"><Glyph w={16} h={16}><path d="M1.500 1.500l13 13M14.500 1.500l-13 13" stroke="#111" strokeWidth="1.200" /></Glyph></Tool>
          </RecorderButtons>
        </Recorder>
        <Pointer><Glyph w={14} h={22}><path d="M1 1v16l4-3.500L8 20l3-1.500L8.500 12H13z" fill="#fff" stroke="#111" /></Glyph></Pointer>
      </TitleArea>

      <Ribbon>
        <Group $w={191} $left={0}>
          <GroupBody>
            <Column $cut $w={54}>
              <LabelTool>选择</LabelTool>
              <LabelTool>所有</LabelTool>
              <LabelTool>属性</LabelTool>
            </Column>
            <Column>
              <LabelTool $off>{icon.blockEdit}块编辑器</LabelTool>
              <LabelTool>{icon.plus}快速实体导入</LabelTool>
              <LabelTool>{icon.poly}多边形实体输入</LabelTool>
            </Column>
          </GroupBody>
          <GroupLabel $shift={93}>选择</GroupLabel>
        </Group>
        <Group $w={239} $left={17}>
          <GroupBody>
            <IconGrid $cols="30px 44px 32px 43px 33px 36px">
              {drawCells.map((c, i) => <ToolCell key={i} c={c} />)}
            </IconGrid>
          </GroupBody>
          <GroupLabel>绘制</GroupLabel>
        </Group>
        <Group $w={155} $left={16}>
          <GroupBody>
            <Column $w={111}>
              <LabelTool>{icon.mtext}多行文本</LabelTool>
              <LabelTool>{icon.stext}单行文本</LabelTool>
              <LabelTool>{icon.attr}属性定义</LabelTool>
            </Column>
            <Column>
              <Tool aria-label="标注">{icon.dim}</Tool>
              <Tool aria-label="文字样式">{icon.tstyle}</Tool>
              <Tool aria-label="编辑文字">{icon.edit}</Tool>
            </Column>
          </GroupBody>
          <GroupLabel>文字</GroupLabel>
        </Group>
        <Group $w={254} $left={16}>
          <GroupBody>
            <IconGrid $cols="30px 29px 48px 42px 30px 31px 24px">
              {toolCells.map((c, i) => <ToolCell key={i} c={c} />)}
            </IconGrid>
          </GroupBody>
          <GroupLabel>工具</GroupLabel>
        </Group>
        <Group $w={92} $left={16}>
          <GroupBody>
            <Column>
              <LabelTool>{icon.layers}图层</LabelTool>
              <LabelTool>{icon.ltype}线型</LabelTool>
            </Column>
          </GroupBody>
          <GroupLabel>属性</GroupLabel>
        </Group>
        <Group $w={213} $left={10}>
          <GroupBody>
            <BigSnap>
              <Glyph w={38} h={38}>
                <path d="M6 33V15a11 11 0 0111-11" stroke="#c9282b" strokeWidth="9" />
                <path d="M17 4a11 11 0 0111 11v8" stroke="#3f6fae" strokeWidth="9" />
                <path d="M4 33V15A13 13 0 0117 2" stroke="#f07a70" strokeWidth="2" />
                <path d="M20 3a12 12 0 0110 12v8" stroke="#8fb6e0" strokeWidth="2" />
                <rect x="19.500" y="20.500" width="18" height="17" rx="2" fill="#36a238" stroke="#1c7424" />
                <path d="M23 29l4 5 7-10" stroke="#fff" strokeWidth="3" />
              </Glyph>
              捕捉
            </BigSnap>
            <SnapGrid>
              {snapShapes.map(s => (
                <SnapToggle key={s.id} $on={s.on} aria-label={s.name} aria-pressed={!!s.on}>
                  <svg width="20" height="20" viewBox="0 0 20 20" fill="none" stroke="#35589c" strokeWidth="1.600">{s.art}</svg>
                </SnapToggle>
              ))}
            </SnapGrid>
          </GroupBody>
          <GroupLabel>捕捉</GroupLabel>
        </Group>
        <Group $w={74} $left={17}>
          <GroupBody>
            <IconGrid $cols="29px 20px">
              {['paste', 'del', 'cut', 'pasteBlk', 'copy', 'matchProp'].map(k => <ToolCell key={k} c={{ k }} />)}
            </IconGrid>
          </GroupBody>
          <GroupLabel>编辑</GroupLabel>
        </Group>
      </Ribbon>

      <DocTabs>
        <DocTab>
          <span>dwg</span>
          <SmallSquare aria-label="关闭"><Chevron d="M2 2l8 8M10 2l-8 8" c="#fff" w={2.5} /></SmallSquare>
        </DocTab>
        <DocName>New2.dxf</DocName>
      </DocTabs>

      <Work>
        <Palette>
          <PaneHead $pad={8}><Pin /></PaneHead>
          <Combo>
            <ComboSelect aria-label="对象"><option /></ComboSelect>
            <ComboMark><Chevron d="M1 4l5 5 5-5" c="#666" w={1.5} /></ComboMark>
          </Combo>
          <GridPane>
            <PropTable>
              <tbody>
                {props.map((p, i) => (
                  <tr key={i}>
                    <Key scope="row">{p.latinKey ? <Latin>{p.key}</Latin> : p.key}</Key>
                    <Value>{p.swatch && <Swatch />}{p.latin ? <Latin>{p.value}</Latin> : p.value}</Value>
                  </tr>
                ))}
                <tr><Key scope="row" /><Value /></tr>
              </tbody>
            </PropTable>
            <VScroll>
              <Chevron d="M2 8l4-4 4 4" w={2.5} />
              <VThumb />
              <Chevron d="M2 4l4 4 4-4" w={2.5} />
            </VScroll>
          </GridPane>
          <PaneHead $pad={28}><Pin /></PaneHead>
          <ListPane><ListHead>路径</ListHead></ListPane>
        </Palette>
        <Stage>
          <Canvas><Drawing /></Canvas>
          <SheetBar>
            <SheetTab>Model</SheetTab>
            <SheetRight>
              <SmallSquare aria-label="列表"><Chevron d="M2 4l4 4 4-4" c="#fff" w={2.5} /></SmallSquare>
              <HScroll>
                <Chevron d="M8 2L4 6l4 4" w={2.5} />
                <HThumb />
              </HScroll>
            </SheetRight>
          </SheetBar>
        </Stage>
      </Work>

      <CommandHead />
      <CommandLog aria-label="命令记录" readOnly />
      <CommandInput aria-label="命令" />

      <StatusBar>
        <StatusCell>g</StatusCell>
        <StatusCell $w={125}>13/31</StatusCell>
        <StatusIcons>
          <Glyph><path d="M4 15V8a5.500 5.500 0 0111 0v5" stroke="#d0535a" strokeWidth="3" /><path d="M10 3a5 5 0 015 5v5" stroke="#5c8fd0" strokeWidth="3" /><path d="M2 12l6 6 8-9" stroke="#138b2c" strokeWidth="4" /><path d="M15 15h4v4h-4z" fill="#c22" /></Glyph>
          <Glyph>{dots([[3, 3], [10, 3], [17, 3], [3, 10], [10, 10], [17, 10], [3, 17], [10, 17], [17, 17]], '#3c3c3c', 2)}</Glyph>
          <Glyph><path d="M9 2v14M1 16h17" stroke="#3a5c9c" strokeWidth="1.500" /></Glyph>
          <Glyph><circle cx="9" cy="9" r="5.500" fill="#eef6ff" /><path d="M2 12l6 6 7-8" stroke="#138b2c" strokeWidth="4" /><path d="M9 10l9-9M10 10h9" stroke="#225" strokeWidth="1.500" /></Glyph>
        </StatusIcons>
        <StatusCell $w={312} $size={14}>(149125.2; 27235.01; 0)</StatusCell>
        <StatusCell $w={151} />
        <StatusCell $w={75}>91204.63 x</StatusCell>
      </StatusBar>

      <Taskbar>
        <Search placeholder="在这里输入你要搜索的内容" aria-label="搜索" />
        <TaskGroup>
          <Task aria-label="任务视图"><Glyph w={20} h={20}><path d="M1 1v4h12V1M1 19v-4h12v4M1 5h12v10H1zM18 0v20" stroke="#111" strokeWidth="1.300" /><path d="M16 7h4v4h-4z" fill="#111" /></Glyph></Task>
          <Task aria-label="应用">
            <Glyph w={30} h={30}>
              {[310, 238, 166, 94, 22].map(a => <circle key={a} cx={15 + 7.5 * Math.sin(a * Math.PI / 180)} cy={15 - 7.5 * Math.cos(a * Math.PI / 180)} r="7" fill="#05050a" stroke="#dedce9" strokeWidth="1.200" />)}
              <path d="M15 15c-5 1-7-1-9-4" stroke="#dedce9" strokeWidth="1.200" />
            </Glyph>
          </Task>
        </TaskGroup>
        <TaskGroup>
          <Task aria-label="文件资源管理器"><Glyph w={28} h={24}><path d="M1 1h11l2 3h12v19H1z" fill="#fbcf58" /><path d="M1 1h11l-2 3H1z" fill="#c98a13" /><path d="M5 23v-9h18v9h-4v-4h-9v4z" fill="#3a93c9" /></Glyph></Task>
          <Task $run aria-label="浏览器"><Glyph w={28} h={28}><circle cx="14" cy="15" r="9" stroke="#58b52e" strokeWidth="5" /><path d="M7 14h18v4H7z" fill="#58b52e" /><path d="M17 18h9v3h-9z" fill="#dedde8" /><path d="M4 27C-1 17 12 1 26 1M24 2c-3 0-16 5-20 22" stroke="#6cc23e" strokeWidth="1.500" /></Glyph></Task>
          <Task $active aria-label="CAD"><Glyph w={30} h={30}><rect width="30" height="30" rx="2" fill="#2960b4" /><path d="M3 3l2 2h17v3H5L3 10zM24 6h3" fill="#fff" stroke="#fff" /><path d="M27.500 3v24M2 27h22" stroke="#a9c7f0" /><text x="2" y="21" fontSize="12" fill="#fff">CAD</text></Glyph></Task>
          <Task $run aria-label="Chrome"><Glyph w={28} h={28}><circle cx="14" cy="14" r="13" fill="#f7c934" /><path d="M14 14L2.700 7.500A13 13 0 0125.300 7.500H14z" fill="#d6402f" /><path d="M14 14L2.700 7.500A13 13 0 0013 27l6-11z" fill="#2c9447" /><circle cx="14" cy="14" r="6.500" fill="#fff" /><circle cx="14" cy="14" r="5" fill="#4384e6" /></Glyph></Task>
          <Task $run aria-label="CAD"><Glyph w={30} h={30}><path d="M0 0h30v30H0z" fill="#2a72dd" /><path d="M7 0v30M0 7h30" stroke="#6ea8f4" /><path d="M3 3h8v8H3z" fill="#a5cbff" opacity=".7" /><text x="0" y="24" fontSize="14" fill="#fff">CAD</text></Glyph></Task>
        </TaskGroup>
        <Tray>
          <NewsButton aria-label="资讯"><Glyph w={30} h={20}><path d="M1 1h25v18H3l-2-2zM26 5h3v12l-2 2h-4M5 5h17" stroke="#111" strokeWidth="2" /><path d="M6 9h6v6H6zM15 9h7M15 12h7M15 15h7" stroke="#111" strokeWidth="1.600" /></Glyph></NewsButton>
          <Tool aria-label="云"><Glyph><path d="M4 16a4 4 0 010-8c1-5 8-6 10-1 7 0 7 9 1 9z" fill="#b4b4b8" stroke="#333" /><path d="M4 15c4-7 9-6 14-1l-2 1z" fill="#efeff2" /></Glyph></Tool>
          <Tool aria-label="更新"><Glyph><path d="M1 4l18-3v17H1z" stroke="#111" strokeWidth="1.300" /><path d="M6 9c1-4 6-4 8-1V5M13 11c-1 4-6 4-7 1v3" stroke="#111" strokeWidth="1.300" /><circle cx="15" cy="15" r="4.500" fill="#f0a020" /></Glyph></Tool>
          <Tool aria-label="电池"><Glyph><path d="M7 7h12v7H7z" fill="#000" /><path d="M4 6h15.500v9H6v-4" stroke="#000" strokeWidth="1.200" /><path d="M2 1v3M5 1v3M3.500 6v4M1 4h5v2H1z" stroke="#111" strokeWidth="1.200" /></Glyph></Tool>
          <Tool aria-label="网络"><Glyph><path d="M3 17C3 9 9 3 18 3M6 17c0-6 5-11 12-11M10 17c0-4 3-8 8-8M13 17c0-2 2-5 5-5" stroke="#333" strokeWidth="1.200" /><circle cx="17" cy="16" r="1.500" fill="#111" /></Glyph></Tool>
          <Tool aria-label="音量"><Glyph><path d="M1 8h3l4-4v12l-4-4H1zM11 8c1 1 1 3 0 4M14 6c2 2 2 6 0 8" stroke="#111" strokeWidth="1.200" /><path d="M16 4c4 3 4 9 0 12" stroke="#999" /></Glyph></Tool>
          <Ime>中</Ime>
          <Clock>20:45 周四<br />2021/8/19<AlertDot /></Clock>
          <Notify aria-label="通知">
            <Glyph w={22} h={24}><path d="M5 3h16v14H11l-4 4v-4H5z" fill="#000" /><path d="M2 5v14h4" stroke="#000" strokeWidth="2" /><path d="M8 7h10M8 10h10M8 13h6" stroke="#ddd" strokeWidth="1.300" /></Glyph>
            <Count>1</Count>
          </Notify>
        </Tray>
      </Taskbar>
    </Window>
  );
}
